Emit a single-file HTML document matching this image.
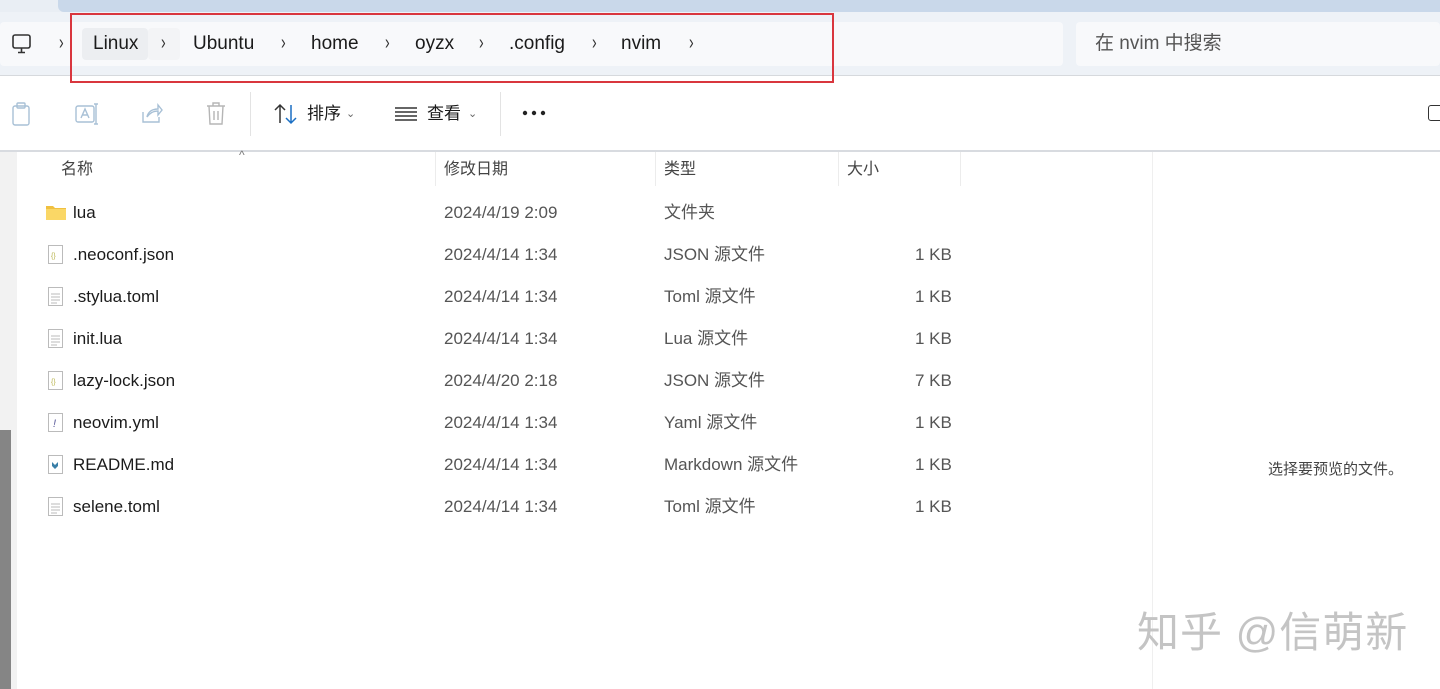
<!DOCTYPE html><html><head><meta charset="utf-8"><style>
*{margin:0;padding:0;box-sizing:border-box}
body{width:1440px;height:689px;overflow:hidden;background:#fff;font-family:"Liberation Sans","Noto Sans CJK SC",sans-serif;color:#1b1b1b;position:relative}
.a{position:absolute}
.t{position:absolute;white-space:nowrap;line-height:22px}
.crumb{font-size:19px;top:33px}
.chev{font-size:20px;top:32px;color:#333;transform:scaleX(.7)}
.row{position:absolute;left:0;width:1150px;height:42px;font-size:17px}
.row span{position:absolute;top:10px;white-space:nowrap;line-height:22px}
.hd{font-size:16px;color:#444;top:159px}
</style></head><body>
<div class="a" style="left:0;top:0;width:1440px;height:13px;background:#e9eef4"></div>
<div class="a" style="left:58px;top:0;width:1382px;height:12px;background:#c9d8ea;border-radius:0 0 0 6px"></div>
<div class="a" style="left:0;top:12px;width:1440px;height:64px;background:#eef2f7;border-bottom:1px solid #d6d9dd"></div>
<div class="a" style="left:0;top:22px;width:1063px;height:44px;background:#f8f9fb;border-radius:4px"></div>
<div class="a" style="left:1076px;top:22px;width:364px;height:44px;background:#f8f9fb;border-radius:4px"></div>
<svg class="a" style="left:11px;top:33px" width="22" height="22" viewBox="0 0 22 22"><rect x="2" y="2" width="17" height="13" rx="2" fill="none" stroke="#333" stroke-width="1.6"/><path d="M10.5 15v4M7 19.5h7" stroke="#333" stroke-width="1.6"/></svg>
<div class="t chev" style="left:58px">›</div>
<div class="a" style="left:82px;top:28px;width:66px;height:32px;background:#eceef1;border-radius:4px"></div>
<div class="a" style="left:148px;top:28px;width:32px;height:32px;background:#f3f4f6;border-radius:4px"></div>
<div class="t crumb" style="left:93px">Linux</div>
<div class="t chev" style="left:160px">›</div>
<div class="t crumb" style="left:193px">Ubuntu</div>
<div class="t chev" style="left:280px">›</div>
<div class="t crumb" style="left:311px">home</div>
<div class="t chev" style="left:384px">›</div>
<div class="t crumb" style="left:415px">oyzx</div>
<div class="t chev" style="left:478px">›</div>
<div class="t crumb" style="left:509px">.config</div>
<div class="t chev" style="left:591px">›</div>
<div class="t crumb" style="left:621px">nvim</div>
<div class="t chev" style="left:688px">›</div>
<div class="a" style="left:70px;top:13px;width:764px;height:70px;border:2px solid #d9363e"></div>
<div class="t" style="left:1095px;top:33px;font-size:19px;color:#555">在 nvim 中搜索</div>
<svg class="a" style="left:10px;top:101px" width="24" height="26" viewBox="0 0 24 26" fill="none" stroke="#a8c0d6" stroke-width="1.4"><rect x="3" y="5" width="16" height="19" rx="2"/><rect x="7" y="2" width="8" height="5" rx="1"/></svg>
<svg class="a" style="left:74px;top:101px" width="26" height="26" viewBox="0 0 26 26" fill="none" stroke="#a8c0d6" stroke-width="1.4"><rect x="2" y="5" width="18" height="16" rx="2"/><path d="M7 17l4-9 4 9M8.5 14h5M22 3v20M20 3h4M20 23h4"/></svg>
<svg class="a" style="left:140px;top:102px" width="24" height="24" viewBox="0 0 24 24" fill="none" stroke="#a8c0d6" stroke-width="1.4"><path d="M3 10v10h16v-5"/><path d="M7 15c1-5 5-8 11-8V3l4 5-4 5V9c-5 0-8 2-11 6z"/></svg>
<svg class="a" style="left:205px;top:101px" width="22" height="26" viewBox="0 0 22 26" fill="none" stroke="#b5b5b5" stroke-width="1.4"><path d="M2 5h18M8 5V2h6v3M4 5l1 18h12l1-18M9 10v9M13 10v9"/></svg>
<div class="a" style="left:250px;top:92px;width:1px;height:44px;background:#e3e3e3"></div>
<svg class="a" style="left:274px;top:103px" width="24" height="22" viewBox="0 0 24 22" fill="none" stroke="#333" stroke-width="1.5"><path d="M6 20V2M1 7l5-5 5 5"/><path d="M17 2v18M12 15l5 5 5-5" stroke="#1a6fc4"/></svg>
<div class="t" style="left:307px;top:103px;font-size:17px">排序</div>
<div class="t" style="left:346px;top:103px;font-size:11px;color:#666">⌄</div>
<svg class="a" style="left:395px;top:107px" width="22" height="14" viewBox="0 0 22 14" stroke="#333" stroke-width="1.5"><path d="M0 1h22M0 5h22M0 9h22M0 13h22"/></svg>
<div class="t" style="left:427px;top:103px;font-size:17px">查看</div>
<div class="t" style="left:468px;top:103px;font-size:11px;color:#666">⌄</div>
<div class="a" style="left:500px;top:92px;width:1px;height:44px;background:#e3e3e3"></div>
<svg class="a" style="left:522px;top:110px" width="24" height="6"><circle cx="3" cy="3" r="2.2" fill="#222"/><circle cx="12" cy="3" r="2.2" fill="#222"/><circle cx="21" cy="3" r="2.2" fill="#222"/></svg>
<div class="a" style="left:1428px;top:105px;width:16px;height:16px;border:1.5px solid #333;border-radius:3px"></div>
<div class="a" style="left:0;top:150px;width:1440px;height:2px;background:#d8dbe0"></div>
<div class="a" style="left:0;top:152px;width:17px;height:537px;background:#f2f2f2"></div>
<div class="a" style="left:0;top:430px;width:11px;height:259px;background:#858585"></div>
<div class="a" style="left:1152px;top:152px;width:1px;height:537px;background:#efefef"></div>
<div class="t" style="left:239px;top:144px;font-size:12px;color:#777">^</div>
<div class="t hd" style="left:61px">名称</div>
<div class="a" style="left:435px;top:152px;width:1px;height:34px;background:#ececec"></div>
<div class="t hd" style="left:444px">修改日期</div>
<div class="a" style="left:655px;top:152px;width:1px;height:34px;background:#ececec"></div>
<div class="t hd" style="left:664px">类型</div>
<div class="a" style="left:838px;top:152px;width:1px;height:34px;background:#ececec"></div>
<div class="t hd" style="left:847px">大小</div>
<div class="a" style="left:960px;top:152px;width:1px;height:34px;background:#ececec"></div>
<div class="row" style="top:192px"><svg class="a" style="left:46px;top:12px" width="20" height="16" viewBox="0 0 20 16"><path d="M0 2h7l2 2h11v12H0z" fill="#f0c040"/><rect y="5" width="20" height="11" fill="#fad766"/></svg><span style="left:73px">lua</span><span style="left:444px;color:#555">2024/4/19 2:09</span><span style="left:664px;color:#555">文件夹</span></div>
<div class="row" style="top:234px"><svg class="a" style="left:48px;top:11px" width="16" height="20"><rect x=".5" y=".5" width="14" height="18" fill="#fff" stroke="#bbb"/><text x="3" y="13" font-size="7" fill="#b9b34c">{}</text></svg><span style="left:73px">.neoconf.json</span><span style="left:444px;color:#555">2024/4/14 1:34</span><span style="left:664px;color:#555">JSON 源文件</span><span style="left:915px;color:#555">1 KB</span></div>
<div class="row" style="top:276px"><svg class="a" style="left:48px;top:11px" width="16" height="20" stroke="#bbb"><rect x=".5" y=".5" width="14" height="18" fill="#fff"/><path d="M3 7h9M3 10h9M3 13h9M3 16h6"/></svg><span style="left:73px">.stylua.toml</span><span style="left:444px;color:#555">2024/4/14 1:34</span><span style="left:664px;color:#555">Toml 源文件</span><span style="left:915px;color:#555">1 KB</span></div>
<div class="row" style="top:318px"><svg class="a" style="left:48px;top:11px" width="16" height="20" stroke="#bbb"><rect x=".5" y=".5" width="14" height="18" fill="#fff"/><path d="M3 7h9M3 10h9M3 13h9M3 16h6"/></svg><span style="left:73px">init.lua</span><span style="left:444px;color:#555">2024/4/14 1:34</span><span style="left:664px;color:#555">Lua 源文件</span><span style="left:915px;color:#555">1 KB</span></div>
<div class="row" style="top:360px"><svg class="a" style="left:48px;top:11px" width="16" height="20"><rect x=".5" y=".5" width="14" height="18" fill="#fff" stroke="#bbb"/><text x="3" y="13" font-size="7" fill="#b9b34c">{}</text></svg><span style="left:73px">lazy-lock.json</span><span style="left:444px;color:#555">2024/4/20 2:18</span><span style="left:664px;color:#555">JSON 源文件</span><span style="left:915px;color:#555">7 KB</span></div>
<div class="row" style="top:402px"><svg class="a" style="left:48px;top:11px" width="16" height="20"><rect x=".5" y=".5" width="14" height="18" fill="#fff" stroke="#bbb"/><text x="5" y="14" font-size="11" font-style="italic" fill="#5a5a9a">!</text></svg><span style="left:73px">neovim.yml</span><span style="left:444px;color:#555">2024/4/14 1:34</span><span style="left:664px;color:#555">Yaml 源文件</span><span style="left:915px;color:#555">1 KB</span></div>
<div class="row" style="top:444px"><svg class="a" style="left:48px;top:11px" width="16" height="20"><rect x=".5" y=".5" width="14" height="18" fill="#fff" stroke="#bbb"/><path d="M4 7v4l3 3 3-3V7l-3 3z" fill="#3a7fa8"/></svg><span style="left:73px">README.md</span><span style="left:444px;color:#555">2024/4/14 1:34</span><span style="left:664px;color:#555">Markdown 源文件</span><span style="left:915px;color:#555">1 KB</span></div>
<div class="row" style="top:486px"><svg class="a" style="left:48px;top:11px" width="16" height="20" stroke="#bbb"><rect x=".5" y=".5" width="14" height="18" fill="#fff"/><path d="M3 7h9M3 10h9M3 13h9M3 16h6"/></svg><span style="left:73px">selene.toml</span><span style="left:444px;color:#555">2024/4/14 1:34</span><span style="left:664px;color:#555">Toml 源文件</span><span style="left:915px;color:#555">1 KB</span></div>
<div class="t" style="left:1268px;top:459px;font-size:15px;color:#444">选择要预览的文件。</div>
<div class="t" style="left:1137px;top:610px;font-size:42px;line-height:46px;color:#c4c4c4;letter-spacing:1px">知乎 @信萌新</div>
</body></html>
